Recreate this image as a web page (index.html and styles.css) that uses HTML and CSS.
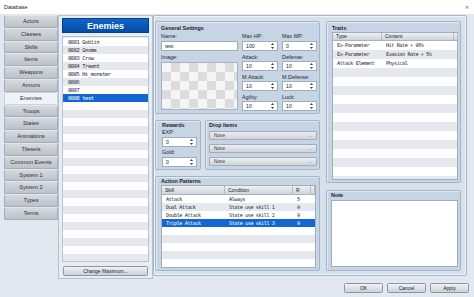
FILE: index.html
```html
<!DOCTYPE html>
<html lang="en">
<head>
    <meta charset="UTF-8">
    <meta name="viewport" content="width=device-width, initial-scale=1.0">
    <title>Database</title>
    <link rel="stylesheet" href="styles.css">
</head>
<body>
    <div class="titlebar">
        <span class="title">Database</span>
        <span class="close">✕</span>
    </div>

    <div class="panes">
        <!-- 왼쪽 탭 목록 -->
        <div class="tabs">
            <div class="tab">Actors</div>
            <div class="tab">Classes</div>
            <div class="tab">Skills</div>
            <div class="tab">Items</div>
            <div class="tab">Weapons</div>
            <div class="tab">Armors</div>
            <div class="tab active">Enemies</div>
            <div class="tab">Troops</div>
            <div class="tab">States</div>
            <div class="tab">Animations</div>
            <div class="tab">Tilesets</div>
            <div class="tab">Common Events</div>
            <div class="tab">System 1</div>
            <div class="tab">System 2</div>
            <div class="tab">Types</div>
            <div class="tab">Terms</div>
        </div>

        <!-- 적 목록 -->
        <div class="enemies">
            <div class="enemies-head">Enemies</div>
            <div class="list">
                <div class="item">0001 Goblin</div>
                <div class="item">0002 Gnome</div>
                <div class="item">0003 Crow</div>
                <div class="item">0004 Treant</div>
                <div class="item">0005 Hi_monster</div>
                <div class="item">0006</div>
                <div class="item">0007</div>
                <div class="item selected">0008 test</div>
            </div>
            <button class="btn change">Change Maximum...</button>
        </div>

        <!-- 편집 영역 -->
        <div class="editor">
            <div class="col left">
                <div class="group general">
                    <div class="group-title">General Settings</div>
                    <div class="general-grid">
                        <div class="label first">Name:</div>
                        <div class="label first">Max HP:</div>
                        <div class="label first">Max MP:</div>

                        <div class="field">test</div>
                        <div class="field spin">100<svg class="arrows" width="3" height="6" viewBox="0 0 3 6"><path d="M1.5 0L3 2H0Z M1.5 6L3 4H0Z" fill="#3a3a3a"/></svg></div>
                        <div class="field spin">0<svg class="arrows" width="3" height="6" viewBox="0 0 3 6"><path d="M1.5 0L3 2H0Z M1.5 6L3 4H0Z" fill="#3a3a3a"/></svg></div>

                        <div class="label">Image:</div>
                        <div class="label">Attack:</div>
                        <div class="label">Defense:</div>

                        <div class="image"></div>
                        <div class="field spin">10<svg class="arrows" width="3" height="6" viewBox="0 0 3 6"><path d="M1.5 0L3 2H0Z M1.5 6L3 4H0Z" fill="#3a3a3a"/></svg></div>
                        <div class="field spin">10<svg class="arrows" width="3" height="6" viewBox="0 0 3 6"><path d="M1.5 0L3 2H0Z M1.5 6L3 4H0Z" fill="#3a3a3a"/></svg></div>

                        <div class="label">M.Attack:</div>
                        <div class="label">M.Defense:</div>
                        <div class="field spin">10<svg class="arrows" width="3" height="6" viewBox="0 0 3 6"><path d="M1.5 0L3 2H0Z M1.5 6L3 4H0Z" fill="#3a3a3a"/></svg></div>
                        <div class="field spin">10<svg class="arrows" width="3" height="6" viewBox="0 0 3 6"><path d="M1.5 0L3 2H0Z M1.5 6L3 4H0Z" fill="#3a3a3a"/></svg></div>

                        <div class="label">Agility:</div>
                        <div class="label">Luck:</div>
                        <div class="field spin">10<svg class="arrows" width="3" height="6" viewBox="0 0 3 6"><path d="M1.5 0L3 2H0Z M1.5 6L3 4H0Z" fill="#3a3a3a"/></svg></div>
                        <div class="field spin">10<svg class="arrows" width="3" height="6" viewBox="0 0 3 6"><path d="M1.5 0L3 2H0Z M1.5 6L3 4H0Z" fill="#3a3a3a"/></svg></div>
                    </div>
                </div>

                <div class="group-row">
                    <div class="group rewards">
                        <div class="group-title">Rewards</div>
                        <div class="label">EXP:</div>
                        <div class="field spin">0<svg class="arrows" width="3" height="6" viewBox="0 0 3 6"><path d="M1.5 0L3 2H0Z M1.5 6L3 4H0Z" fill="#3a3a3a"/></svg></div>
                        <div class="label gold">Gold:</div>
                        <div class="field spin">0<svg class="arrows" width="3" height="6" viewBox="0 0 3 6"><path d="M1.5 0L3 2H0Z M1.5 6L3 4H0Z" fill="#3a3a3a"/></svg></div>
                    </div>
                    <div class="group drops">
                        <div class="group-title">Drop Items</div>
                        <div class="drop-list">
                            <div class="select"><span>None</span><span class="dots">...</span></div>
                            <div class="select"><span>None</span><span class="dots">...</span></div>
                            <div class="select"><span>None</span><span class="dots">...</span></div>
                        </div>
                    </div>
                </div>

                <div class="group actions">
                    <div class="group-title">Action Patterns</div>
                    <div class="table">
                        <div class="thead action-cols">
                            <div>Skill</div><div>Condition</div><div>R</div><div></div>
                        </div>
                        <div class="tbody">
                            <div class="trow action-cols"><div>Attack</div><div>Always</div><div>5</div></div>
                            <div class="trow action-cols"><div>Dual Attack</div><div>State use skill 1</div><div>9</div></div>
                            <div class="trow action-cols"><div>Double Attack</div><div>State use skill 2</div><div>9</div></div>
                            <div class="trow action-cols selected"><div>Triple Attack</div><div>State use skill 3</div><div>9</div></div>
                        </div>
                    </div>
                </div>
            </div>

            <div class="col right">
                <div class="group traits">
                    <div class="group-title">Traits</div>
                    <div class="table">
                        <div class="thead trait-cols">
                            <div>Type</div><div>Content</div><div></div>
                        </div>
                        <div class="tbody tall">
                            <div class="trow trait-cols"><div>Ex-Parameter</div><div>Hit Rate + 95%</div></div>
                            <div class="trow trait-cols"><div>Ex-Parameter</div><div>Evasion Rate + 5%</div></div>
                            <div class="trow trait-cols"><div>Attack Element</div><div>Physical</div></div>
                        </div>
                    </div>
                </div>
                <div class="group note">
                    <div class="group-title">Note</div>
                    <div class="textarea"></div>
                </div>
            </div>
        </div>
    </div>

    <div class="footer">
        <button class="btn">OK</button>
        <button class="btn">Cancel</button>
        <button class="btn">Apply</button>
    </div>
</body>
</html>
```

FILE: styles.css
```css
* {
    box-sizing: border-box;
}

body {
    margin: 0;
    width: 474px; height: 297px;
    overflow: hidden;
    background: #e1e8f0;
    font-family: "Liberation Sans", Arial, sans-serif;
    font-size: 5px;
    color: #1d2733;
}

/* 창 제목 */
.titlebar {
    display: flex;
    justify-content: space-between;
    align-items: center;
    height: 14px;
    padding: 0 5px 0 4px;
    background: #ffffff;
    font-size: 5.5px;
    color: #222;
}
.close {
    font-size: 5px;
    color: #666;
}

.panes {
    display: flex;
    height: 266px;
    padding: 1px 0 0 4px;
}

/* 탭 */
.tabs {
    display: flex;
    flex-direction: column;
    width: 54px;
}
.tab {
    height: 12.8px;
    line-height: 11.8px;
    text-align: center;
    font-size: 5.6px;
    color: #2b2f36;
    background: linear-gradient(#d6d9de, #bdc2c9);
    border: 1px solid #a6adb7;
    border-top-color: #e3e6ea;
    border-radius: 1.5px;
}
.tab.active {
    background: #eef3f8;
    border-color: #c9d3de;
}

/* 적 목록 패널 */
.enemies {
    display: flex;
    flex-direction: column;
    width: 95px; height: 264px;
    padding: 2px 3px;
    background: #e7edf4;
    border: 1px solid #b3c1d0;
}
.enemies-head {
    height: 15px;
    line-height: 15px;
    text-align: center;
    font-size: 9px;
    font-weight: bold;
    color: #fff;
    background: linear-gradient(#1463c7, #004da9);
    border: 1px solid #003f8e;
}
.list {
    height: 226px;
    margin-top: 3px;
    padding-top: 1px;
    border: 1px solid #b8c4d1;
    background: repeating-linear-gradient(#fff 0 8px, #e5e9ee 8px 16px) 0 1px;
    font-family: "DejaVu Sans Mono", monospace;
    font-size: 5.4px;
    letter-spacing: -0.4px;
}
.item {
    height: 8px;
    line-height: 8px;
    padding-left: 5px;
    color: #1f2630;
}
.item.selected, .trow.selected {
    background: #1467d2;
    color: #fff;
}

.btn {
    height: 10px;
    padding: 0;
    font-family: "Liberation Sans", Arial, sans-serif;
    font-size: 5px;
    color: #222;
    background: linear-gradient(#f0f2f5, #cdd2d8);
    border: 1px solid #8d97a4;
    border-radius: 1.5px;
}
.change {
    margin: 4px 1px 0 1px;
}

/* 편집 영역 */
.editor {
    display: flex;
    gap: 6px;
    width: 314px; height: 261px;
    padding: 5px 5px 3px 1px;
    background: #d7e1eb;
    border: 1px solid #a7b6c7;
    box-shadow: inset 0 0 0 1px #eef3f8;
    border-radius: 2px;
}
.col {
    display: flex;
    flex-direction: column;
}
.col.left {
    width: 165px;
    gap: 6px;
}
.col.right {
    width: 135px;
    gap: 7px;
}

.group {
    background: #c7d4e3;
    border: 1px solid #a3b4c7;
    box-shadow: inset 1px 1px 0 #e3eaf2;
    border-radius: 2px;
    padding: 0 2px 2px 5px;
}
.group-title {
    height: 8px;
    line-height: 8px;
    font-size: 5.4px;
    font-weight: bold;
    color: #17202b;
}
.general .group-title, .traits .group-title {
    margin-top: 2px;
}

.label {
    line-height: 7px;
    font-size: 5.4px;
    color: #1d2733;
    align-self: end;
}
.label.first {
    align-self: center;
}

.field {
    display: flex;
    justify-content: space-between;
    align-items: center;
    height: 10px;
    padding: 0 3px 0 3px;
    background: #fff;
    border: 1px solid #9eadbf;
    font-size: 5.2px;
    color: #222;
}
.arrows {
    display: block;
}

/* 기본 설정 */
.general {
    height: 93px;
}
.general-grid {
    display: grid;
    grid-template-columns: 77px 36px 35px;
    grid-template-rows: 9px 10px 10px 10px 10px 10px 10px 10px;
    column-gap: 4px;
}
.image {
    grid-row: 4 / 9;
    margin: 1px 0;
    border: 1px solid #a6b3c2;
    background-color: #f5f5f5;
    background-image:
        linear-gradient(45deg, #dcdcdc 25%, transparent 25%, transparent 75%, #dcdcdc 75%),
        linear-gradient(45deg, #dcdcdc 25%, transparent 25%, transparent 75%, #dcdcdc 75%);
    background-size: 18px 18px;
    background-position: 0 0, 9px 9px;
}

/* 보상 / 드롭 */
.group-row {
    display: flex;
    gap: 4px;
    height: 50px;
}
.rewards {
    width: 46px;
    padding-left: 6px;
    padding-right: 3px;
}
.rewards .label {
    margin-bottom: 1px;
}
.rewards .label.gold {
    margin-top: 2px;
}
.drops {
    flex: 1;
    padding-left: 3px;
}
.drop-list {
    display: flex;
    flex-direction: column;
    gap: 4px;
    margin-top: 2px;
}
.select {
    display: flex;
    justify-content: space-between;
    align-items: center;
    height: 9px;
    padding: 0 4px;
    background: linear-gradient(#eceef1, #cfd4da);
    border: 1px solid #a2abb6;
    border-radius: 1px;
    font-size: 4.6px;
    color: #333;
}
.dots {
    color: #777;
}

/* 표 */
.table {
    display: flex;
    flex-direction: column;
    border: 1px solid #9fadbd;
    background: #fff;
}
.thead {
    display: grid;
    height: 9px;
    background: linear-gradient(#eef0f3, #d0d5db);
    border-bottom: 1px solid #aab3be;
    font-size: 5px;
    color: #222;
}
.thead > div {
    line-height: 8px;
    padding-left: 3px;
    border-right: 1px solid #b3bcc6;
}
.tbody {
    flex: 1;
    background: repeating-linear-gradient(#fff 0 8px, #e5e9ee 8px 16px);
    font-family: "DejaVu Sans Mono", monospace;
    font-size: 5.2px;
    letter-spacing: -0.45px;
}
.trow {
    display: grid;
    height: 8px;
    line-height: 8px;
    color: #1f2630;
}
.trow > div {
    padding-left: 4px;
    white-space: nowrap;
}

.actions {
    height: 95px;
}
.actions .table {
    height: 83px;
    margin-right: 1px;
}
.action-cols {
    grid-template-columns: 63px 68px 18px 1fr;
}

.traits {
    height: 162px;
}
.traits .table {
    height: 148px;
}
.traits .thead {
    height: 8px;
}
.traits .thead > div {
    line-height: 7px;
}
.tbody.tall {
    background: repeating-linear-gradient(#fff 0 9px, #e5e9ee 9px 18px);
}
.tbody.tall .trow {
    height: 9px;
    line-height: 9px;
}
.trait-cols {
    grid-template-columns: 49px 72px 1fr;
}

.note {
    height: 81px;
    padding-left: 4px;
}
.textarea {
    height: 67px;
    margin-top: 1px;
    background: #fff;
    border: 1px solid #9fadbd;
}

/* 하단 버튼 */
.footer {
    display: flex;
    justify-content: flex-end;
    gap: 4px;
    padding: 3px 5px 0 0;
}
.footer .btn {
    width: 39px;
}
```
